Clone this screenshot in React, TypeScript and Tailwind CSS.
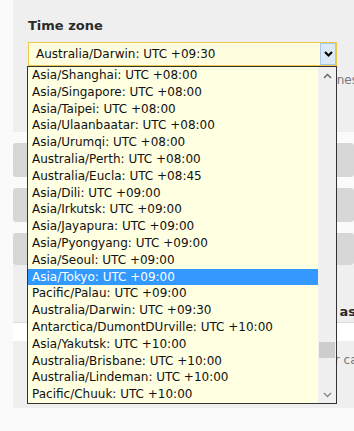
const zones = [
  "Asia/Shanghai: UTC +08:00",
  "Asia/Singapore: UTC +08:00",
  "Asia/Taipei: UTC +08:00",
  "Asia/Ulaanbaatar: UTC +08:00",
  "Asia/Urumqi: UTC +08:00",
  "Australia/Perth: UTC +08:00",
  "Australia/Eucla: UTC +08:45",
  "Asia/Dili: UTC +09:00",
  "Asia/Irkutsk: UTC +09:00",
  "Asia/Jayapura: UTC +09:00",
  "Asia/Pyongyang: UTC +09:00",
  "Asia/Seoul: UTC +09:00",
  "Asia/Tokyo: UTC +09:00",
  "Pacific/Palau: UTC +09:00",
  "Australia/Darwin: UTC +09:30",
  "Antarctica/DumontDUrville: UTC +10:00",
  "Asia/Yakutsk: UTC +10:00",
  "Australia/Brisbane: UTC +10:00",
  "Australia/Lindeman: UTC +10:00",
  "Pacific/Chuuk: UTC +10:00",
];

const highlighted = "Asia/Tokyo: UTC +09:00";

function Chevron({ up = false }: { up?: boolean }) {
  return (
    <svg width="9" height="6" viewBox="0 0 9 6">
      <path d={up ? "M1 5 L4.5 1.5 L8 5" : "M1 1 L4.5 4.5 L8 1"} fill="none" stroke="currentColor" strokeWidth="1.4" />
    </svg>
  );
}

export default function App() {
  return (
    <div className="relative h-[431px] w-[354px] overflow-hidden bg-[#fafafa] font-['DejaVu_Sans',sans-serif] text-[12px]">
      <div className="ml-[13px] flex flex-col">
        <section className="h-[132px] bg-[#efefef] pl-[15px] pt-[17px]">
          <h2 className="text-[13px] font-bold leading-[18px] text-[#2b2b2b]">Time zone</h2>
          <div className="mt-[7px] flex h-[24px] w-[309px] items-stretch border border-[#ecc94b] bg-[#ffffe0]">
            <span className="flex flex-1 items-center pl-[7px] text-[#111]">Australia/Darwin: UTC +09:30</span>
            <span className="flex w-[16px] items-center justify-center border border-[#a9c7e6] bg-[#dce8f6] text-black">
              <svg width="9" height="6" viewBox="0 0 9 6">
                <path d="M1 1 L4.5 4.5 L8 1" fill="none" stroke="currentColor" strokeWidth="2" />
              </svg>
            </span>
          </div>
          <div className="-mr-[4px] mt-[6px] flex justify-end whitespace-nowrap leading-[16px] text-[#777]">
            All time zones
          </div>
        </section>

        <div className="mt-[11px] flex flex-col gap-[11px]">
          <div className="h-[34px] rounded-[3px] bg-[#d7d7d7]" />
          <div className="h-[34px] rounded-[3px] bg-[#d7d7d7]" />
          <div className="h-[32px] rounded-[3px] bg-[#d7d7d7]" />
        </div>

        <section className="h-[143px] bg-[#efefef]">
          <div className="h-[58px] border-b border-[#dcdcdc] pt-[39px]">
            <div className="-mr-[2px] flex justify-end whitespace-nowrap text-[13px] font-bold leading-[16px] text-[#2b2b2b]">
              Show as
            </div>
          </div>
          <div className="h-[18px] bg-white" />
          <p className="mt-[11px] whitespace-nowrap pl-[308px] leading-[16px] text-[#777]">For calendar</p>
        </section>
      </div>

      <div className="absolute left-[27px] top-[66px] flex h-[338px] w-[310px] border border-[#333] bg-[#ffffe1]">
        <ul className="flex w-[290px] flex-col">
          {zones.map((z) => (
            <li
              key={z}
              className={
                "h-[16.8px] whitespace-nowrap pl-[4px] leading-[16.8px] " +
                (z === highlighted ? "bg-[#3399ff] text-white" : "text-[#111]")
              }
            >
              {z}
            </li>
          ))}
        </ul>
        <div className="flex w-[18px] flex-col bg-[#f0f0f0]">
          <div className="flex h-[17px] items-center justify-center text-[#606060]">
            <Chevron up />
          </div>
          <div className="flex flex-1 flex-col justify-end pb-[28px]">
            <div className="mx-[1px] h-[16px] bg-[#cdcdcd]" />
          </div>
          <div className="flex h-[17px] items-center justify-center text-[#888]">
            <Chevron />
          </div>
        </div>
      </div>
    </div>
  );
}
